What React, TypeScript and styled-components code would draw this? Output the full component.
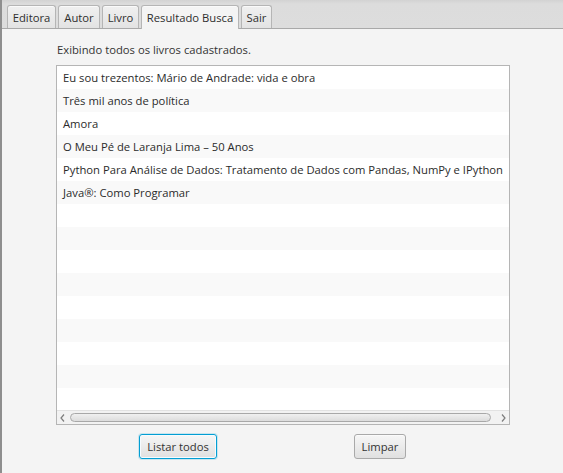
import React from 'react';
import styled, { createGlobalStyle } from 'styled-components';

const GlobalStyle = createGlobalStyle`
  html, body {
    margin: 0;
    padding: 0;
    background: #f4f4f4;
  }
  body {
    font-family: 'Open Sans', 'Noto Sans', sans-serif;
    font-size: 11.25px;
    color: #333333;
  }
`;

const books = [
  'Eu sou trezentos: Mário de Andrade: vida e obra',
  'Três mil anos de política',
  'Amora',
  'O Meu Pé de Laranja Lima – 50 Anos',
  'Python Para Análise de Dados: Tratamento de Dados com Pandas, NumPy e IPython',
  'Java®: Como Programar'
];

const ROW_COUNT = 15;

const tabs = [
  { label: 'Editora', width: 49 },
  { label: 'Autor', width: 42 },
  { label: 'Livro', width: 37 },
  { label: 'Resultado Busca', width: 98, selected: true },
  { label: 'Sair', width: 31 }
];

const App: React.FC = () => {
  const rows = Array.from({ length: ROW_COUNT }, (_, i) => books[i] ?? '');

  return (
    <>
      <GlobalStyle />
      <Window>
        <TabHeader>
          {tabs.map((tab) => (
            <Tab key={tab.label} $width={tab.width} $selected={!!tab.selected}>
              {tab.label}
            </Tab>
          ))}
        </TabHeader>
        <Content>
          <Caption>Exibindo todos os livros cadastrados.</Caption>
          <ListView>
            <Rows>
              {rows.map((title, index) => (
                <Row key={index} $odd={index % 2 === 1}>
                  {title}
                </Row>
              ))}
            </Rows>
            <ScrollBar>
              <Arrow viewBox="0 0 5 8">
                <path d="M4 0.5 L1 4 L4 7.5" />
              </Arrow>
              <Track>
                <Thumb />
              </Track>
              <Arrow viewBox="0 0 5 8">
                <path d="M1 0.5 L4 4 L1 7.5" />
              </Arrow>
            </ScrollBar>
          </ListView>
          <ButtonRow>
            <Button $focused $width={78}>
              Listar todos
            </Button>
            <Button $width={52}>Limpar</Button>
          </ButtonRow>
        </Content>
      </Window>
    </>
  );
};

export default App;

const Window = styled.div`
  display: flex;
  flex-direction: column;
  width: 563px;
  height: 473px;
  box-sizing: border-box;
  border-left: 2px solid #8e8e8e;
  background: #f4f4f4;
  overflow: hidden;
`;

const TabHeader = styled.div`
  display: flex;
  align-items: flex-end;
  gap: 2px;
  height: 28px;
  padding-left: 5px;
  border-bottom: 1px solid #a9a9a9;
  background: linear-gradient(#d2d2d2, #dcdcdc 4px, #dddddd);
  flex-shrink: 0;
`;

const Tab = styled.div<{ $width: number; $selected: boolean }>`
  box-sizing: border-box;
  width: ${({ $width }) => $width}px;
  height: ${({ $selected }) => ($selected ? 24 : 23)}px;
  margin-bottom: ${({ $selected }) => ($selected ? -1 : 0)}px;
  padding-bottom: ${({ $selected }) => ($selected ? 1 : 0)}px;
  display: flex;
  align-items: center;
  justify-content: center;
  white-space: nowrap;
  border: 1px solid #b5b5b5;
  border-bottom: 0;
  border-radius: 3px 3px 0 0;
  background: ${({ $selected }) =>
    $selected ? '#f4f4f4' : 'linear-gradient(#f0f0f0, #e3e3e3)'};
  box-shadow: inset 0 1px 0 #fafafa;
  color: #2e2e2e;
`;

const Content = styled.div`
  display: flex;
  flex-direction: column;
  padding: 13px 0 0 54px;
`;

const Caption = styled.div`
  height: 16px;
  line-height: 16px;
  padding-left: 1px;
  margin-bottom: 7px;
`;

const ListView = styled.div`
  display: flex;
  flex-direction: column;
  width: 454px;
  height: 360px;
  box-sizing: border-box;
  border: 1px solid #b5b5b5;
  background: #ffffff;
  overflow: hidden;
`;

const Rows = styled.div`
  display: flex;
  flex-direction: column;
  flex: 1;
  overflow: hidden;
`;

const Row = styled.div<{ $odd: boolean }>`
  height: 23px;
  line-height: 23px;
  padding-left: 6px;
  white-space: nowrap;
  flex-shrink: 0;
  background: ${({ $odd }) => ($odd ? '#f9f9f9' : '#ffffff')};
  color: #2b2b2b;
`;

const ScrollBar = styled.div`
  display: flex;
  align-items: center;
  height: 13px;
  padding: 0 3px;
  background: #f2f2f2;
  border-top: 1px solid #e2e2e2;
  flex-shrink: 0;
`;

const Arrow = styled.svg`
  width: 5px;
  height: 8px;
  flex-shrink: 0;
  fill: none;
  stroke: #7d7d7d;
  stroke-width: 1.2;
`;

const Track = styled.div`
  flex: 1;
  display: flex;
  align-items: center;
  padding: 0 10px 0 5px;
`;

const Thumb = styled.div`
  flex: 1;
  height: 7px;
  border: 1px solid #a8a8a8;
  border-radius: 5px;
  background: linear-gradient(#f0f0f0, #dcdcdc);
`;

const ButtonRow = styled.div`
  display: flex;
  align-items: center;
  gap: 137px;
  margin-top: 9px;
  padding-left: 83px;
`;

const Button = styled.button<{ $width: number; $focused?: boolean }>`
  box-sizing: border-box;
  width: ${({ $width }) => $width}px;
  height: 25px;
  padding: 0;
  font-family: inherit;
  font-size: 11.25px;
  color: #333;
  border-radius: 3px;
  border: 1px solid ${({ $focused }) => ($focused ? '#039ed3' : '#a9a9a9')};
  background: linear-gradient(#f6f6f6, #e0e0e0);
  box-shadow: ${({ $focused }) =>
    $focused
      ? 'inset 0 0 0 1px #f6fbfe, 0 0 0 1px rgba(3, 158, 211, 0.18)'
      : 'inset 0 1px 0 #fbfbfb'};
  cursor: pointer;
`;
